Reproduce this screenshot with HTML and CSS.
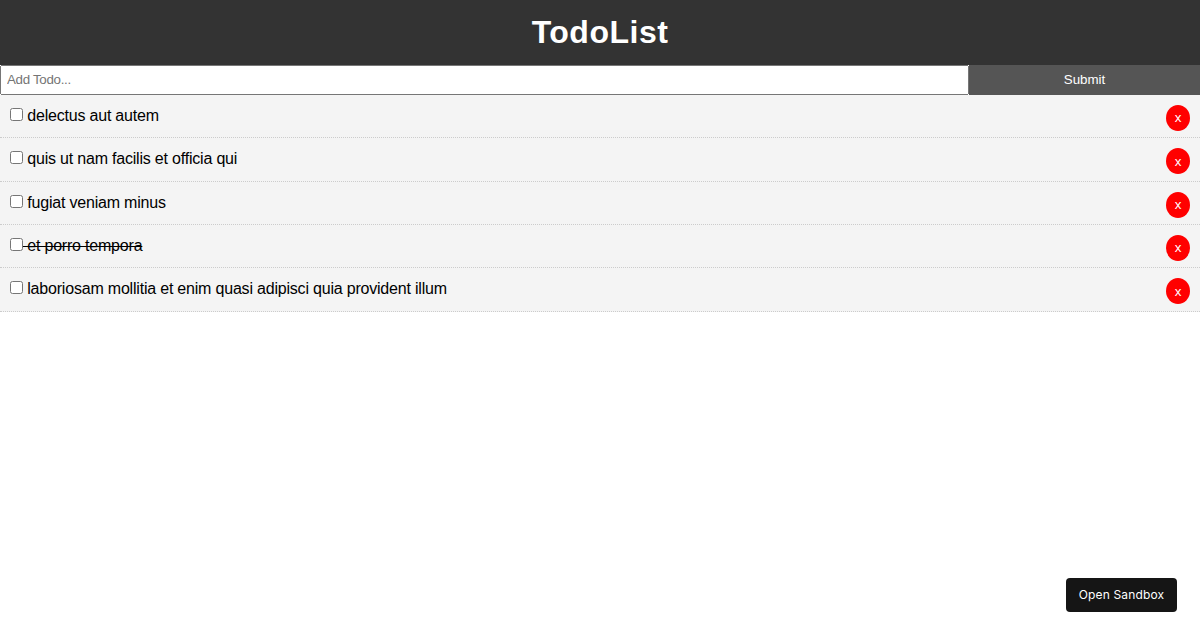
FILE: index.html
```html
<!DOCTYPE html>
<html lang="en">
<head>
    <meta charset="UTF-8">
    <meta name="viewport" content="width=device-width, initial-scale=1.0">
    <title>TodoList</title>
    <link rel="stylesheet" href="styles.css">
</head>
<body>

    <header class="header">
        <h1>TodoList</h1>
    </header>

    <form class="todo-form">
        <input type="text" class="todo-input" placeholder="Add Todo...">
        <input type="submit" class="btn" value="Submit">
    </form>

    <div class="todo-item">
        <p>
            <input type="checkbox"> delectus aut autem
            <button type="button" class="del-btn">x</button>
        </p>
    </div>
    <div class="todo-item">
        <p>
            <input type="checkbox"> quis ut nam facilis et officia qui
            <button type="button" class="del-btn">x</button>
        </p>
    </div>
    <div class="todo-item">
        <p>
            <input type="checkbox"> fugiat veniam minus
            <button type="button" class="del-btn">x</button>
        </p>
    </div>
    <div class="todo-item completed">
        <p>
            <input type="checkbox"> et porro tempora
            <button type="button" class="del-btn">x</button>
        </p>
    </div>
    <div class="todo-item">
        <p>
            <input type="checkbox"> laboriosam mollitia et enim quasi adipisci quia provident illum
            <button type="button" class="del-btn">x</button>
        </p>
    </div>

    <a class="sandbox-link">Open Sandbox</a>

</body>
</html>
```

FILE: styles.css
```css
/* General Styles */
* {
    box-sizing: border-box;
    margin: 0;
    padding: 0;
}

body {
    font-family: 'Liberation Sans', Arial, sans-serif;
    line-height: 1.4;
    background-color: #fff;
}

.header {
    background: #333;
    color: #fff;
    text-align: center;
    padding: 10px;
}

.header h1 {
    letter-spacing: 0.5px;
}

.todo-form {
    display: flex;
}

.todo-input {
    flex: 0 0 969px;
    height: 30px;
    padding: 5px;
    font-family: 'Liberation Sans', Arial, sans-serif;
    font-size: 13.333px;
    letter-spacing: -0.3px;
}

.btn {
    flex: 1;
    padding: 7px 20px;
    border: none;
    background: #555;
    color: #fff;
    font-family: 'Liberation Sans', Arial, sans-serif;
    font-size: 13.333px;
    cursor: pointer;
}

.todo-item {
    background: #f4f4f4;
    padding: 10px;
    border-bottom: 1px #ccc dotted;
    letter-spacing: -0.2px;
}

.completed p {
    text-decoration: line-through;
}

.del-btn {
    float: right;
    width: 24px;
    height: 26px;
    border: none;
    border-radius: 50%;
    background: #ff0000;
    color: #fff;
    font-family: 'Liberation Sans', Arial, sans-serif;
    font-size: 13.333px;
    cursor: pointer;
}

.sandbox-link {
    position: fixed;
    right: 23px;
    bottom: 18px;
    width: 111px;
    height: 34px;
    display: flex;
    align-items: center;
    justify-content: center;
    border-radius: 4px;
    background: #151515;
    color: #fff;
    font-family: Inter, sans-serif;
    font-size: 12px;
    letter-spacing: 0.15px;
}
```
